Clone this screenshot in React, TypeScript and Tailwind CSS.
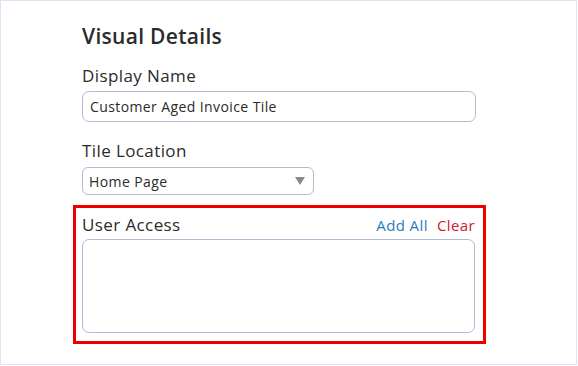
import React from 'react';

const font = { fontFamily: '"Open Sans", "Noto Sans", sans-serif' };

export default function App() {
  return (
    <div
      className="w-[577px] h-[365px] border border-[#dde3f0] bg-white text-[#2b2b2b]"
      style={font}
    >
      <div className="pl-[81px] pt-[21px] w-[475px]">
        <h2 className="text-[21px] font-semibold leading-[28px] tracking-[0.3px]">Visual Details</h2>

        <label className="block mt-[15px] text-[17px] leading-[22px] tracking-[0.4px]">Display Name</label>
        <div className="mt-[4px] h-[31px] w-[394px] rounded-[7px] border border-[#b3bad4] flex items-center pl-[7px] text-[14px] tracking-[0.4px]">
          Customer Aged Invoice Tile
        </div>

        <label className="block mt-[18px] text-[17px] leading-[22px] tracking-[0.4px]">Tile Location</label>
        <div className="mt-[5px] h-[28px] w-[232px] rounded-[6px] border border-[#b3bad4] flex items-center justify-between pl-[6px] pr-[8px] text-[14px] tracking-[0.4px]">
          <span>Home Page</span>
          <svg width="10" height="8" viewBox="0 0 10 8">
            <path d="M0 0 L10 0 L5 8 Z" fill="#8a8a8a" />
          </svg>
        </div>

        <div className="mt-[10px] -ml-[9px] w-[413px] border-[3px] border-[#ee0000] pl-[6px] pr-[8px] pt-[6px] pb-[8px]">
          <div className="flex items-center justify-between text-[17px] leading-[22px] tracking-[0.4px]">
            <span>User Access</span>
            <div className="flex gap-[9px] text-[15px]">
              <span className="text-[#2b7bb9]">Add All</span>
              <span className="text-[#c8202f]">Clear</span>
            </div>
          </div>
          <div className="mt-[3px] h-[94px] rounded-[7px] border border-[#b3bad4]" />
        </div>
      </div>
    </div>
  );
}
